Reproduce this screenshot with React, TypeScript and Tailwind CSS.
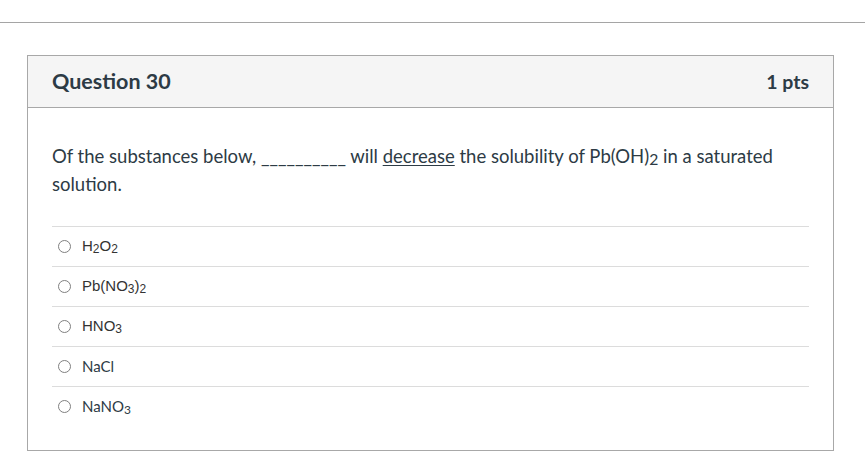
import React from "react";

type Part = string | { sub: string };

interface Option {
  id: string;
  parts: Part[];
  font: "arial" | "lato";
}

const options: Option[] = [
  { id: "a", parts: ["H", { sub: "2" }, "O", { sub: "2" }], font: "arial" },
  { id: "b", parts: ["Pb(NO", { sub: "3" }, ")", { sub: "2" }], font: "arial" },
  { id: "c", parts: ["HNO", { sub: "3" }], font: "arial" },
  { id: "d", parts: ["NaCl"], font: "lato" },
  { id: "e", parts: ["NaNO", { sub: "3" }], font: "lato" },
];

function Formula({ parts }: { parts: Part[] }) {
  return (
    <>
      {parts.map((p, i) =>
        typeof p === "string" ? (
          <span key={i}>{p}</span>
        ) : (
          <sub key={i} className="text-[0.8em] relative top-[0.15em]">
            {p.sub}
          </sub>
        )
      )}
    </>
  );
}

export default function App() {
  return (
    <div className="w-[865px] h-[470px] bg-white font-['Lato','Open_Sans',sans-serif] text-[#2d3b45]">
      <div className="pt-[22px]">
        <div className="h-px bg-[#a5a5a5]" />
      </div>

      <div className="ml-[27px] mt-[32px] w-[807px] border border-[#a8a8a8]">
        {/* header */}
        <div className="h-[52px] bg-[#f5f5f5] border-b border-[#a8a8a8] flex items-center justify-between px-[24px]">
          <h2 className="text-[21.5px] font-bold">Question 30</h2>
          <span className="text-[19.5px] font-bold">1 pts</span>
        </div>

        {/* body */}
        <div className="px-[24px] pt-[34px] pb-[24px]">
          <p className="text-[18.5px] leading-[28px]">
            <span>Of the substances below, __________ will </span>
            <span className="underline underline-offset-2">decrease</span>
            <span> the solubility of Pb(OH)</span>
            <sub className="text-[0.85em] relative top-[0.1em]">2</sub>
            <span> in a saturated</span> <span>solution.</span>
          </p>

          <div className="mt-[28px]">
            {options.map((opt) => (
              <label
                key={opt.id}
                className="h-[40px] border-t border-[#dcdcdc] flex items-center gap-[11px] pl-[6px]"
              >
                <span className="w-[13px] h-[13px] rounded-full border border-[#808080] bg-white shrink-0" />
                <span
                  className={
                    opt.font === "arial"
                      ? "font-['Liberation_Sans',Arial,sans-serif] text-[15px] text-[#333]"
                      : "text-[15px] text-[#2d3b45]"
                  }
                >
                  <Formula parts={opt.parts} />
                </span>
              </label>
            ))}
          </div>
        </div>
      </div>
    </div>
  );
}
